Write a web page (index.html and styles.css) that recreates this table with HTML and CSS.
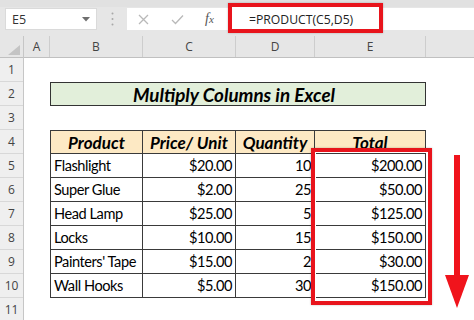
FILE: index.html
```html
<!DOCTYPE html>
<html>
<head>
<meta charset="utf-8">
<link rel="stylesheet" href="styles.css">
</head>
<body>
<div class="app">
  <div class="fbar">
    <div class="namebox">
      <span class="ref">E5</span>
      <svg class="caret" width="8" height="5" viewBox="0 0 8 5"><polygon points="0,0 8,0 4,4.5" fill="#6f6f6f"/></svg>
    </div>
    <div class="sep">
      <svg width="3" height="14" viewBox="0 0 3 14"><circle cx="1.5" cy="1.5" r="1" fill="#a8a8a8"/><circle cx="1.5" cy="7" r="1" fill="#a8a8a8"/><circle cx="1.5" cy="12.5" r="1" fill="#a8a8a8"/></svg>
    </div>
    <div class="formula">
      <span class="ico"><svg width="11" height="11" viewBox="0 0 11 11"><path d="M1 1 L10 10 M10 1 L1 10" stroke="#b9b9b9" stroke-width="1.3" fill="none"/></svg></span>
      <span class="ico"><svg width="13" height="11" viewBox="0 0 13 11"><path d="M1 6 L4.5 9.5 L12 1.5" stroke="#b9b9b9" stroke-width="1.3" fill="none"/></svg></span>
      <span class="fx">f<span class="fxx">x</span></span>
      <span class="ftext">=PRODUCT(C5,D5)</span>
    </div>
  </div>

  <div class="sheet">
    <div class="rowheads">
      <div class="corner"><svg width="24" height="22" viewBox="0 0 24 22"><polygon points="20,9 20,19 8,19" fill="#c4c4c4"/></svg></div>
      <div class="rh">1</div>
      <div class="rh">2</div>
      <div class="rh">3</div>
      <div class="rh">4</div>
      <div class="rh">5</div>
      <div class="rh">6</div>
      <div class="rh">7</div>
      <div class="rh">8</div>
      <div class="rh">9</div>
      <div class="rh">10</div>
      <div class="rh">11</div>
    </div>
    <div class="main">
      <div class="colheads">
        <div class="ch w-a">A</div>
        <div class="ch w-b">B</div>
        <div class="ch w-c">C</div>
        <div class="ch w-d">D</div>
        <div class="ch w-e">E</div>
        <div class="ch w-f"></div>
      </div>
      <div class="cells">
        <div class="title">Multiply Columns in Excel</div>
        <div class="table">
          <div class="th first">Product</div>
          <div class="th">Price/ Unit</div>
          <div class="th">Quantity</div>
          <div class="th">Total</div>

          <div class="td first">Flashlight</div>
          <div class="td num">$20.00</div>
          <div class="td num">10</div>
          <div class="td num">$200.00</div>

          <div class="td first">Super Glue</div>
          <div class="td num">$2.00</div>
          <div class="td num">25</div>
          <div class="td num">$50.00</div>

          <div class="td first">Head Lamp</div>
          <div class="td num">$25.00</div>
          <div class="td num">5</div>
          <div class="td num">$125.00</div>

          <div class="td first">Locks</div>
          <div class="td num">$10.00</div>
          <div class="td num">15</div>
          <div class="td num">$150.00</div>

          <div class="td first">Painters' Tape</div>
          <div class="td num">$15.00</div>
          <div class="td num">2</div>
          <div class="td num">$30.00</div>

          <div class="td first">Wall Hooks</div>
          <div class="td num">$5.00</div>
          <div class="td num">30</div>
          <div class="td num">$150.00</div>
        </div>
      </div>
    </div>
  </div>

  <div class="hl hl-formula"></div>
  <div class="hl hl-range"></div>
  <svg class="arrow" width="26" height="156" viewBox="0 0 26 156">
    <rect x="10" y="0" width="6" height="124" fill="#f0141c"/>
    <polygon points="1,120 25,120 13,153" fill="#f0141c"/>
  </svg>
</div>
</body>
</html>
```

FILE: styles.css
```css
* {
  box-sizing: border-box;
  margin: 0;
  padding: 0;
}

body {
  width: 474px;
  height: 320px;
  overflow: hidden;
  background: #ffffff;
  font-family: Lato, "Liberation Sans", sans-serif;
  color: #000;
}

.app {
  position: relative;
  width: 474px;
  height: 320px;
}

/* formula bar */
.fbar {
  height: 36px;
  background: #e6e6e6;
  display: flex;
  align-items: flex-start;
  padding-left: 5px;
  border-top: 7px solid #e1e1e1;
  padding-top: 1px;
}

.namebox {
  width: 92px;
  height: 22px;
  background: #fff;
  border: 1px solid #dadada;
  display: flex;
  align-items: center;
  justify-content: space-between;
  padding: 0 6px 0 6px;
  font-family: "Open Sans", sans-serif;
  font-size: 12.5px;
  color: #333;
}

.sep {
  width: 30px;
  height: 22px;
  display: flex;
  align-items: center;
  justify-content: center;
}

.formula {
  flex: 1;
  height: 22px;
  background: #fff;
  display: flex;
  align-items: center;
  padding-left: 10px;
}

.ico {
  width: 13px;
  display: flex;
  justify-content: center;
  align-items: center;
  margin-right: 21px;
}

.fx {
  font-family: "Liberation Serif", serif;
  font-style: italic;
  font-size: 14px;
  color: #555;
  width: 14px;
}

.fxx {
  font-size: 11px;
}

.ftext {
  margin-left: 30px;
  font-family: "Open Sans", sans-serif;
  font-size: 12.2px;
  color: #222;
}

/* sheet */
.sheet {
  display: flex;
  background: #fff;
}

.rowheads {
  width: 24px;
  display: flex;
  flex-direction: column;
  background: #efefef;
  border-right: 1px solid #c6c6c6;
}

.corner {
  height: 22px;
  background: #e6e6e6;
  border-bottom: 1px solid #c0c0c0;
}

.corner svg {
  display: block;
}

.rh {
  height: 24px;
  display: flex;
  align-items: center;
  justify-content: center;
  font-family: "Open Sans", sans-serif;
  font-size: 12px;
  color: #444;
  border-bottom: 1px solid #d8d8d8;
}

.main {
  flex: 1;
}

.colheads {
  display: flex;
  height: 22px;
  background: #e6e6e6;
  border-bottom: 1px solid #c0c0c0;
}

.ch {
  display: flex;
  align-items: center;
  justify-content: center;
  font-family: "Open Sans", sans-serif;
  font-size: 12px;
  color: #444;
  border-right: 1px solid #cdcdcd;
}

.w-a { width: 26px; }
.w-b { width: 93px; }
.w-c { width: 93px; }
.w-d { width: 79px; }
.w-e { width: 111px; }
.w-f { flex: 1; border-right: none; }

.cells {
  display: grid;
  grid-template-columns: 26px 93px 93px 79px 111px 1fr;
  grid-template-rows: repeat(11, 24px);
}

.title {
  grid-column: 2 / 6;
  grid-row: 2;
  background: #e2efda;
  border: 1px solid #333;
  display: flex;
  align-items: center;
  justify-content: center;
  font-weight: 700;
  font-style: italic;
  font-size: 18.8px;
  padding-right: 8px;
}

.table {
  grid-column: 2 / 6;
  grid-row: 4 / 11;
  display: grid;
  grid-template-columns: 93px 93px 79px 111px;
  grid-template-rows: repeat(7, 24px);
}

.th,
.td {
  border-right: 1px solid #3a3a3a;
  border-bottom: 1px solid #3a3a3a;
  display: flex;
  align-items: center;
  white-space: nowrap;
  overflow: hidden;
}

.th {
  border-top: 1px solid #3a3a3a;
  background: #fde9c4;
  justify-content: center;
  font-weight: 700;
  font-style: italic;
  font-size: 17px;
}

.first {
  border-left: 1px solid #3a3a3a;
}

.td {
  font-size: 14.6px;
  letter-spacing: -0.45px;
  padding: 0 3px;
}

.num {
  justify-content: flex-end;
}

/* annotations */
.hl {
  position: absolute;
  border: 4px solid #e8141c;
  box-shadow: inset 0 0 0 1px #fff, 0 0 2px rgba(0,0,0,0.25);
}

.hl-formula {
  left: 228px;
  top: 3px;
  width: 155px;
  height: 30px;
}

.hl-range {
  left: 311px;
  top: 148px;
  width: 121px;
  height: 157px;
}

.arrow {
  position: absolute;
  left: 444px;
  top: 155px;
}
```
